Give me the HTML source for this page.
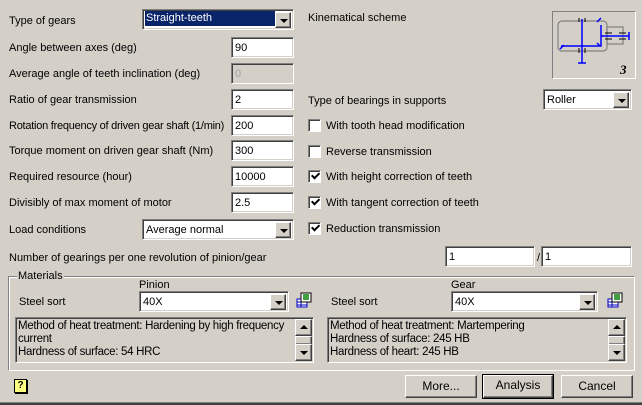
<!DOCTYPE html>
<html><head><style>
*{box-sizing:border-box;margin:0;padding:0}
body{width:642px;height:405px;background:#d4d0c8;font-family:"Liberation Sans",sans-serif;font-size:11px;color:#000;position:relative;overflow:hidden}
.a{position:absolute;white-space:nowrap}
div.a{margin-top:2px}
.in{position:absolute;background:#fff;border:1px solid;border-color:#808080 #fff #fff #808080;box-shadow:inset 1px 1px 0 #404040,inset -1px -1px 0 #d4d0c8;height:21px;padding:3px 0 0 3px;line-height:14px}
.dis{background:#d4d0c8;color:#a0a0a0}
.btn{position:absolute;background:#d4d0c8;border:1px solid;border-color:#fff #404040 #404040 #fff;box-shadow:inset -1px -1px 0 #808080;text-align:center;font-size:12px}
.arr{position:absolute;right:2px;top:2px;width:16px;height:16px}
.arr:after{content:"";position:absolute;left:4px;top:6px;border-left:4px solid transparent;border-right:4px solid transparent;border-top:4px solid #000}
.cb{position:absolute;width:13px;height:13px;background:#fff;border:1px solid;border-color:#808080 #fff #fff #808080;box-shadow:inset 1px 1px 0 #404040}
.ck:after{content:"";position:absolute;left:2px;width:6px;height:3px;border-left:2px solid #000;border-bottom:2px solid #000;transform:rotate(-45deg);transform-origin:0 0;top:5px}
.ta{position:absolute;background:#d4d0c8;border:1px solid;border-color:#808080 #fff #fff #808080;box-shadow:inset 1px 1px 0 #404040;padding:2px 19px 1px 2px;line-height:13px;white-space:normal;font-size:11.5px;letter-spacing:-0.3px}
.sb{position:absolute;right:1px;top:1px;width:17px;bottom:1px;background:repeating-linear-gradient(45deg,#e8e8e8 0 1px,#d4d0c8 1px 2px)}
.sb .btn{width:17px;position:absolute;left:0}
.up:after,.dn:after{content:"";position:absolute;left:4px;border-left:4px solid transparent;border-right:4px solid transparent}
.up:after{top:5px;border-bottom:4px solid #000}
.dn:after{top:6px;border-top:4px solid #000}
</style></head><body>
<div class="a" style="left:9px;top:13px">Type of gears</div>
<div class="in" style="left:142px;top:9px;width:152px;padding:2px">
<div style="background:#0a246a;color:#fff;height:15px;width:130px;padding-left:1px;line-height:15px;margin-top:-1px">Straight-teeth</div>
<div class="btn arr"></div></div>
<div class="a" style="left:9px;top:40px">Angle between axes (deg)</div>
<div class="in" style="left:231px;top:37px;width:63px">90</div>
<div class="a" style="left:9px;top:66px">Average angle of teeth inclination (deg)</div>
<div class="in dis" style="left:231px;top:63px;width:63px">0</div>
<div class="a" style="left:9px;top:92px">Ratio of gear transmission</div>
<div class="in" style="left:231px;top:89px;width:63px">2</div>
<div class="a" style="left:9px;top:118px;letter-spacing:-0.25px">Rotation frequency of driven gear shaft (1/min)</div>
<div class="in" style="left:231px;top:115px;width:63px">200</div>
<div class="a" style="left:9px;top:143px">Torque moment on driven gear shaft (Nm)</div>
<div class="in" style="left:231px;top:140px;width:63px">300</div>
<div class="a" style="left:9px;top:169px">Required resource (hour)</div>
<div class="in" style="left:231px;top:166px;width:63px">10000</div>
<div class="a" style="left:9px;top:195px">Divisibly of max moment of motor</div>
<div class="in" style="left:231px;top:192px;width:63px">2.5</div>
<div class="a" style="left:9px;top:222px">Load conditions</div>
<div class="in" style="left:142px;top:219px;width:152px">Average normal<div class="btn arr"></div></div>
<div class="a" style="left:9px;top:250px">Number of gearings per one revolution of pinion/gear</div>
<div class="in" style="left:445px;top:246px;width:90px">1</div>
<div class="a" style="left:537px;top:250px">/</div>
<div class="in" style="left:541px;top:246px;width:91px">1</div>

<div class="a" style="left:308px;top:10px">Kinematical scheme</div>
<div style="position:absolute;left:552px;top:11px;width:84px;height:68px;border:1px solid;border-color:#808080 #fff #fff #808080">
<svg width="84" height="68" style="position:absolute;left:-1px;top:-1px">
<rect x="6" y="10" width="49" height="30" rx="4" fill="none" stroke="#808080" stroke-width="1.2"/>
<rect x="55" y="16" width="16" height="17" fill="none" stroke="#808080" stroke-width="1.2"/>
<path d="M30 8V52M26 52h8M9 35H49V14M49 25H77M77 21v8M45 11l4-4M8 38l4-4M45 32l3 3" stroke="#0000ff" stroke-width="1.5" fill="none"/>
<path d="M27 7v4M33 7v4M27 37v5M33 37v5M53 22h7M53 28h7M67 22h7M67 28h7" stroke="#000" stroke-width="1"/>
<text x="68" y="63" font-family="Liberation Serif" font-style="italic" font-weight="bold" font-size="13">3</text>
</svg></div>

<div class="a" style="left:308px;top:93px">Type of bearings in supports</div>
<div class="in" style="left:543px;top:89px;width:89px">Roller<div class="btn arr"></div></div>
<div class="cb" style="left:308px;top:119px"></div><div class="a" style="left:326px;top:118px">With tooth head modification</div>
<div class="cb" style="left:308px;top:145px"></div><div class="a" style="left:326px;top:144px">Reverse transmission</div>
<div class="cb ck" style="left:308px;top:170px"></div><div class="a" style="left:326px;top:169px">With height correction of teeth</div>
<div class="cb ck" style="left:308px;top:196px"></div><div class="a" style="left:326px;top:195px">With tangent correction of teeth</div>
<div class="cb ck" style="left:308px;top:222px"></div><div class="a" style="left:326px;top:221px">Reduction transmission</div>

<div style="position:absolute;left:8px;top:276px;width:627px;height:95px;border:1px solid;border-color:#808080 #fff #fff #808080;box-shadow:inset 1px 1px 0 #fff,1px 1px 0 #808080 inset"></div>
<div class="a" style="left:17px;top:268px;background:#d4d0c8;padding:0 1px">Materials</div>
<div class="a" style="left:139px;top:277px">Pinion</div>
<div class="a" style="left:19px;top:294px">Steel sort</div>
<div class="in" style="left:139px;top:291px;width:150px">40X<div class="btn arr"></div></div>
<svg class="a" style="left:296px;top:292px" width="16" height="16"><rect x="1" y="7" width="10" height="8" fill="#fff" stroke="#0000c0"/><path d="M1 10h10M1 13h10M5 7v8" stroke="#0000c0"/><rect x="5" y="1" width="10" height="9" fill="#fff" stroke="#000"/><path d="M7 3h6M7 5h6M7 7h6" stroke="#008000" stroke-width="1.5"/></svg>
<div class="ta" style="left:15px;top:317px;width:299px;height:46px">Method of heat treatment: Hardening by high frequency current<br>Hardness of surface: 54 HRC
<div class="sb"><div class="btn up" style="top:0;height:17px"></div><div class="btn" style="top:17px;height:9px"></div><div class="btn dn" style="bottom:0;height:17px"></div></div></div>

<div class="a" style="left:451px;top:277px">Gear</div>
<div class="a" style="left:331px;top:294px">Steel sort</div>
<div class="in" style="left:451px;top:291px;width:147px">40X<div class="btn arr"></div></div>
<svg class="a" style="left:607px;top:292px" width="16" height="16"><rect x="1" y="7" width="10" height="8" fill="#fff" stroke="#0000c0"/><path d="M1 10h10M1 13h10M5 7v8" stroke="#0000c0"/><rect x="5" y="1" width="10" height="9" fill="#fff" stroke="#000"/><path d="M7 3h6M7 5h6M7 7h6" stroke="#008000" stroke-width="1.5"/></svg>
<div class="ta" style="left:327px;top:317px;width:300px;height:46px">Method of heat treatment: Martempering<br>Hardness of surface: 245 HB<br>Hardness of heart: 245 HB
<div class="sb"><div class="btn up" style="top:0;height:17px"></div><div class="btn" style="top:17px;height:9px"></div><div class="btn dn" style="bottom:0;height:17px"></div></div></div>

<div style="position:absolute;left:14px;top:379px;width:13px;height:14px;background:#ffff80;border:1px solid #000;font-weight:bold;font-size:10px;text-align:center;line-height:12px;box-shadow:1px 1px 0 #000">?</div>
<div class="btn" style="left:405px;top:375px;width:72px;height:23px;line-height:20px">More...</div>
<div class="btn" style="left:483px;top:375px;width:70px;height:23px;line-height:19px;outline:1px solid #000">Analysis</div>
<div class="btn" style="left:561px;top:375px;width:72px;height:23px;line-height:20px">Cancel</div>
<div style="position:absolute;left:0;top:402px;width:642px;height:3px;background:#404040;border-top:1px solid #808080"></div>
</body></html>
